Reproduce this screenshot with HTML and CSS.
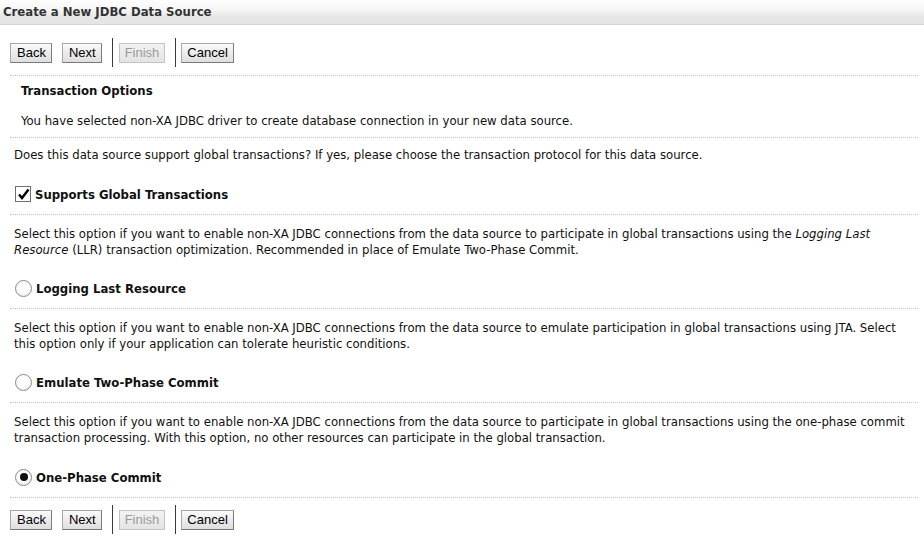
FILE: index.html
```html
<!DOCTYPE html>
<html>
<head>
<meta charset="utf-8">
<link rel="stylesheet" href="styles.css">
</head>
<body>
<div class="header">Create a New JDBC Data Source</div>
<div class="toolbar top">
  <button class="btn">Back</button>
  <button class="btn">Next</button>
  <span class="sep"></span>
  <button class="btn disabled">Finish</button>
  <span class="sep sep2"></span>
  <button class="btn">Cancel</button>
</div>
<div class="content">
  <div class="intro">
    <div class="section-title">Transaction Options</div>
    <div class="intro-text">You have selected non-XA JDBC driver to create database connection in your new data source.</div>
  </div>
  <div class="block first">
    <p class="para">Does this data source support global transactions? If yes, please choose the transaction protocol for this data source.</p>
    <div class="choice">
      <span class="checkbox"><svg width="13" height="13" viewBox="0 0 13 13"><path d="M2 6.5 L5 10 L11.5 1.5" fill="none" stroke="#000" stroke-width="2.4"/></svg></span>
      <span class="choice-label">Supports Global Transactions</span>
    </div>
  </div>
  <div class="block">
    <p class="para">Select this option if you want to enable non-XA JDBC connections from the data source to participate in global transactions using the <em>Logging Last Resource</em> (LLR) transaction optimization. Recommended in place of Emulate Two-Phase Commit.</p>
    <div class="choice">
      <span class="radio"></span>
      <span class="choice-label">Logging Last Resource</span>
    </div>
  </div>
  <div class="block">
    <p class="para">Select this option if you want to enable non-XA JDBC connections from the data source to emulate participation in global transactions using JTA. Select this option only if your application can tolerate heuristic conditions.</p>
    <div class="choice">
      <span class="radio"></span>
      <span class="choice-label">Emulate Two-Phase Commit</span>
    </div>
  </div>
  <div class="block last">
    <p class="para">Select this option if you want to enable non-XA JDBC connections from the data source to participate in global transactions using the one-phase commit transaction processing. With this option, no other resources can participate in the global transaction.</p>
    <div class="choice">
      <span class="radio checked"></span>
      <span class="choice-label">One-Phase Commit</span>
    </div>
  </div>
</div>
<div class="toolbar bottom">
  <button class="btn">Back</button>
  <button class="btn">Next</button>
  <span class="sep"></span>
  <button class="btn disabled">Finish</button>
  <span class="sep sep2"></span>
  <button class="btn">Cancel</button>
</div>
</body>
</html>
```
FILE: styles.css
```css
html, body {
  margin: 0;
  padding: 0;
  background: #fff;
}
body {
  font-family: "DejaVu Sans Condensed", "DejaVu Sans", sans-serif;
  font-size: 13px;
  color: #111;
  width: 924px;
  height: 545px;
  overflow: hidden;
}
.header {
  height: 24px;
  line-height: 23px;
  padding-left: 3px;
  border-bottom: 1px solid #d4d4d4;
  background: linear-gradient(#fefefe 0%, #f6f6f6 40%, #e6e6e6 70%, #e4e4e4 100%);
  font-weight: bold;
  font-size: 13px;
  color: #333;
}
.toolbar {
  display: flex;
  align-items: center;
  padding-left: 10px;
  height: 29px;
}
.toolbar.top {
  margin-top: 13px;
}
.toolbar.bottom {
  margin-top: 7px;
}
.btn {
  font-family: "Liberation Sans", Arial, sans-serif;
  font-size: 13px;
  color: #000;
  height: 20px;
  padding: 0 5px 0 6px;
  margin: 0 10px 0 0;
  border: 1px solid #a8a8a8;
  border-right-color: #7a7a7a;
  border-bottom-color: #7a7a7a;
  border-radius: 0;
  background: linear-gradient(#fafafa, #ececec 50%, #dedede);
  line-height: 18px;
}
.btn:first-child {
  margin-right: 10px;
}
.btn.disabled {
  color: #9a9a9a;
  border-color: #c4c4c4;
  background: linear-gradient(#f2f2f2, #e4e4e4);
  padding: 0 5px;
}
.btn:last-child {
  padding: 0 5px;
}
.sep {
  width: 1px;
  height: 29px;
  background: #3a3a3a;
  margin-right: 6px;
}
.sep.sep2 {
  margin-right: 5px;
}
.content {
  margin: 8px 6px 0 10px;
}
.intro {
  border-top: 1px dotted #c4c4c4;
  padding: 7px 0 8px 11px;
}
.section-title {
  font-weight: bold;
  font-size: 13px;
  line-height: 16px;
}
.intro-text {
  margin-top: 14px;
  line-height: 16px;
}
.block {
  border-top: 1px dotted #c4c4c4;
  padding: 11px 4px 10px 4px;
}
.block.first {
  padding-top: 9px;
}
.block.last {
  border-bottom: 1px dotted #c4c4c4;
}
.para {
  margin: 0;
  line-height: 16px;
}
.choice {
  display: flex;
  align-items: center;
  height: 20px;
  margin-top: 20px;
}
.block.first .choice,
.block.last .choice {
  margin-top: 21px;
}
.choice-label {
  font-weight: bold;
  font-size: 13px;
  margin-left: 4px;
}
.checkbox {
  width: 14px;
  height: 14px;
  border: 1px solid #6f6f6f;
  margin-left: 1px;
  background: #fff;
  display: flex;
  align-items: center;
  justify-content: center;
}
.radio {
  width: 15px;
  height: 15px;
  border: 1px solid #8a8a8a;
  border-radius: 50%;
  margin-left: 1px;
  background: radial-gradient(circle at 50% 40%, #ffffff 40%, #e6e6e6 100%);
  display: flex;
  align-items: center;
  justify-content: center;
}
.radio.checked::after {
  content: "";
  width: 8px;
  height: 8px;
  border-radius: 50%;
  background: #111;
}
```
